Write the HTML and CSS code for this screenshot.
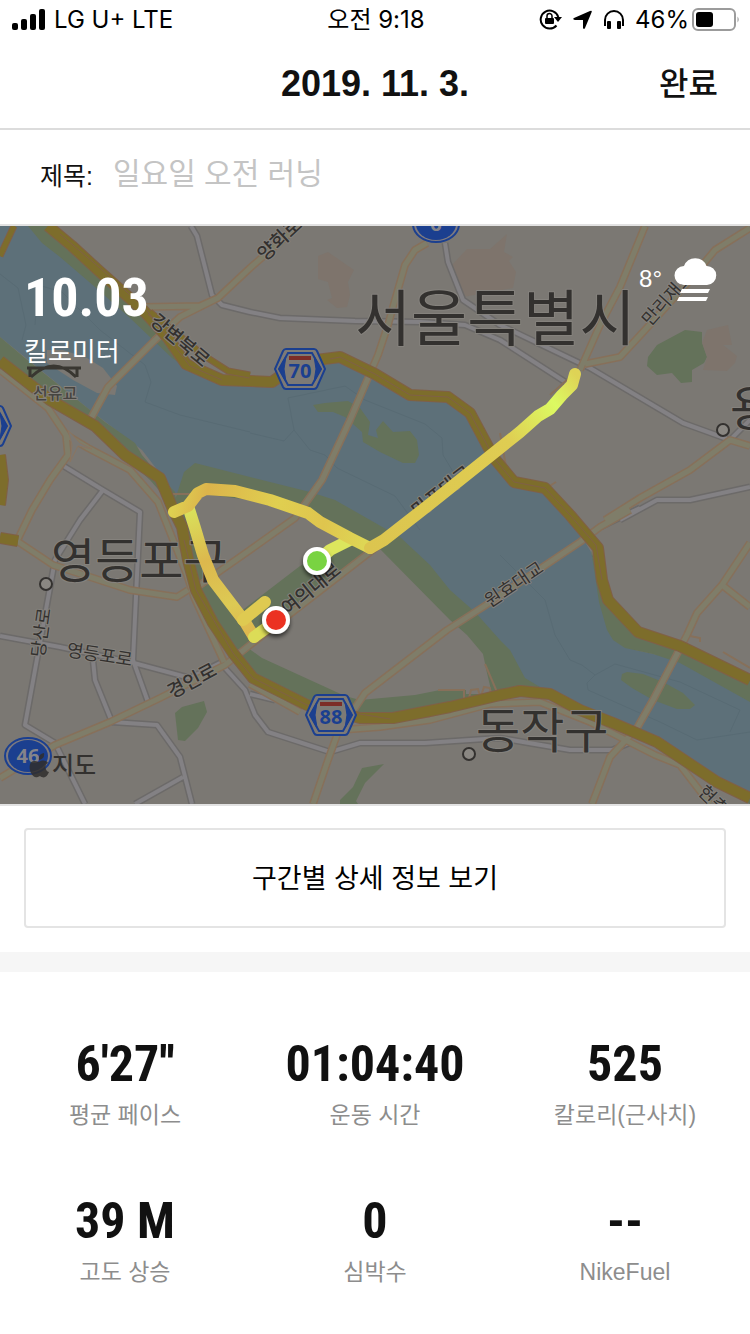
FILE: index.html
```html
<!DOCTYPE html>
<html lang="ko">
<head>
    <meta charset="UTF-8">
    <meta name="viewport" content="width=device-width, initial-scale=1.0">
    <title>러닝 상세</title>
    <link rel="stylesheet" href="styles.css">
</head>
<body>
    <div class="status-bar">
        <div class="status-left">
            <svg width="34" height="22" viewBox="0 0 34 22">
                <rect x="0" y="14" width="6" height="7" rx="2"/>
                <rect x="9" y="10" width="6" height="11" rx="2"/>
                <rect x="18" y="5" width="6" height="16" rx="2"/>
                <rect x="27" y="0" width="6" height="21" rx="2"/>
            </svg>
            <span>LG U+ LTE</span>
        </div>
        <div class="status-time">오전 9:18</div>
        <div class="status-right">
            <svg width="24" height="22" viewBox="0 0 24 22">
                <path d="M17.500 16.500A9 9 0 1 1 19.300 8" fill="none" stroke="#000" stroke-width="2"/>
                <path d="M15 8h8l-4 5z"/>
                <rect x="6" y="9" width="9" height="6" rx="1"/>
                <path d="M8 9V7a2 2 0 0 1 5 0V9" fill="none" stroke="#000" stroke-width="1.500"/>
            </svg>
            <svg width="20" height="20" viewBox="0 0 20 20">
                <path d="M1 8L17 1Q19.500 0 18.500 2.500L12 18Q11 20 10 18V10H2Q-1 9.500 1 8z"/>
            </svg>
            <svg width="22" height="20" viewBox="0 0 22 20">
                <path d="M2 16V10a9 9 0 0 1 18 0v6" fill="none" stroke="#000" stroke-width="2"/>
                <rect x="4" y="11" width="4" height="8" rx="1"/>
                <rect x="14" y="11" width="4" height="8" rx="1"/>
            </svg>
            <span>46%</span>
            <svg class="battery" width="48" height="24" viewBox="0 0 48 24">
                <rect x="1" y="1" width="42" height="21" rx="5" fill="none" stroke="#9b9b9b" stroke-width="2"/>
                <rect x="4" y="4" width="17" height="15" rx="3"/>
                <path d="M45.500 8.500q2.500 3 0 6z" fill="#9b9b9b"/>
            </svg>
        </div>
    </div>

    <header>
        <h1>2019. 11. 3.</h1>
        <button class="done-button" type="button">완료</button>
    </header>

    <div class="title-row">
        <label for="runTitle">제목:</label>
        <input id="runTitle" class="title-input" type="text" placeholder="일요일 오전 러닝">
    </div>

    <div class="map-container">
        <svg class="map" viewBox="0 226 750 578">
            <defs>
                <linearGradient id="routeEast" gradientUnits="userSpaceOnUse" x1="370" y1="548" x2="575" y2="374">
                    <stop offset="0" stop-color="#dcc54f"/>
                    <stop offset=".65" stop-color="#dfcd52"/>
                    <stop offset=".87" stop-color="#dcfa62"/>
                    <stop offset="1" stop-color="#ded356"/>
                </linearGradient>
                <linearGradient id="routeNorth" gradientUnits="userSpaceOnUse" x1="174" y1="500" x2="370" y2="548">
                    <stop offset="0" stop-color="#dfd051"/>
                    <stop offset=".15" stop-color="#dcb44b"/>
                    <stop offset=".5" stop-color="#e0cf50"/>
                    <stop offset=".75" stop-color="#dfc54e"/>
                    <stop offset="1" stop-color="#ded956"/>
                </linearGradient>
                <linearGradient id="routeWest" gradientUnits="userSpaceOnUse" x1="188" y1="506" x2="245" y2="638">
                    <stop offset="0" stop-color="#d9e45c"/>
                    <stop offset=".4" stop-color="#dcb84d"/>
                    <stop offset=".75" stop-color="#ddca54"/>
                    <stop offset="1" stop-color="#dfb64e"/>
                </linearGradient>
                <filter id="pinShadow" x="-50%" y="-50%" width="200%" height="200%">
                    <feDropShadow dx="0" dy="3" stdDeviation="2" flood-opacity=".6"/>
                </filter>
                <g id="hexShield">
                    <path d="M-14 -20H14Q16 -20 17 -18L25 0L17 18Q16 20 14 20H-14Q-16 20 -17 18L-25 0L-17 -18Q-16 -20 -14 -20z" fill="#7d7a76" stroke="#1b3f8f" stroke-width="2"/>
                    <path d="M-12 -16H12L21 0L12 16H-12L-21 0z" fill="none" stroke="#1b3f8f" stroke-width="2"/>
                    <path d="M-14 -13L-21 0L-14 13L-16 0zM14 -13L21 0L14 13L16 0z" fill="#1b3f8f" stroke="#1b3f8f" stroke-width="1"/>
                    <rect x="-11" y="-13" width="22" height="4" fill="#7c2c27"/>
                </g>
                <g id="ovalShield">
                    <ellipse rx="23" ry="18" fill="#7d7a80" stroke="#1b3f8f" stroke-width="2"/>
                    <ellipse rx="20" ry="16" fill="#1b3f8f"/>
                </g>
                <path id="streets" d="M191 226L197 236L212 295L222 305L250 312L280 318L355 321L420 322L465 325L500 340L570 385M445 243L448 262L463 300L500 325L590 368L683 423L730 440L750 420M620 520L657 500H690L750 487M62 465L103 490L140 512L133 660L148 702M103 490L80 520L55 560L25 725L55 743L85 804M0 636L60 647L130 662L190 678L222 662M93 660L95 680L112 722L157 725L180 757L192 804M183 777L135 804M225 668L245 690L255 715L268 732L330 752L360 743L425 743L500 738L570 750L612 750L632 742M600 527L640 508M250 694L275 700"/>
                <path id="roads" d="M90 420L108 387L155 340L180 317L218 298L250 268L298 226M143 307L200 306L218 298M427 243L415 250L405 265L395 300L388 325L378 355L365 385L350 420L322 480L295 518L250 550L190 592M645 226L620 287L600 325L580 370M750 228L715 250L690 280L645 330L620 357L585 364M605 520L640 498L690 470L730 440L750 446M313 804L328 760L337 735L365 693L447 630L483 607L580 542L600 527L630 510M750 543L722 585L697 613L687 635L653 700L637 728L610 757L592 804M722 585L750 607M0 370L48 408L66 435L68 455L50 480L32 510L17 541M17 541L53 565L130 590L177 597L188 590M68 436L88 448L130 470L158 502L187 575L194 597L224 662M0 778L55 745L110 722L160 698L225 665L250 645L370 552L480 466M250 684L300 712M340 730L380 727L430 720L490 704L540 702L590 722L655 755L680 765L710 804"/>
                <g id="highways">
                    <path d="M0 361L50 400L95 426L125 455L160 478L172 507L182 527L188 560L196 590L213 623L233 653L253 678L283 693L307 705L360 718H393L450 707L500 695L520 691L550 694L580 710L613 723L657 742L717 782L750 798"/>
                    <path d="M48 226L72 246L98 270L143 310L168 338L186 364L222 380L272 382L300 362L340 357L375 374L410 395L448 397L470 413L494 458L514 482L545 488L570 515L598 548L602 580L608 600L638 632L680 646L750 680"/>
                    <path d="M0 455L3 480L0 505M0 538L18 541"/>
                </g>
                <path id="ramps" d="M150 312L175 332L203 355L228 371L250 375M0 256L14 226"/>
            </defs>

            <rect x="0" y="226" width="750" height="578" fill="#7b7873"/>

            <!-- river -->
            <path fill="#5d7079" d="M0 226H48L72 246L98 270L143 310L165 340L185 367L220 382L272 384L300 370L340 362L375 378L410 397L450 403L470 420L495 465L515 486L545 493L578 530L591 552L600 585L610 625L635 650L680 660L750 690V800L655 738L600 716L550 694L500 697L400 640L200 500L175 493L142 450L90 410L0 337z"/>
            <g class="depth">
                <path d="M0 274L18 288L26 325L22 340M35 325L38 285L62 292L100 330L145 365L151 382L145 402L180 415L250 432"/>
                <path d="M288 398L294 430L310 450L325 455L337 468L395 496L420 530"/>
                <path d="M288 398L345 386L365 400L425 424L442 438L443 455L458 480"/>
                <path d="M500 555L545 600L555 635L570 660L582 665L595 675L587 683L588 690L660 722L697 740L750 732M595 675L615 664L680 682L740 710L730 732"/>
                <path d="M250 433L284 441L294 430"/>
            </g>

            <!-- river parks and banks -->
            <g fill="#64725a">
                <path d="M28 226H48L72 246L98 270L143 308L185 367L172 358L130 318L95 287L60 257L42 243z"/>
                <path d="M0 337L25 358L50 378L75 398L105 422L135 443L142 455L153 468L175 492L178 512L150 480L95 430L50 403L0 365z"/>
                <path d="M175 500L184 472L195 463L250 477L310 492L335 500L400 537L430 565L450 590L475 612L500 640L510 650L525 678L545 690L500 699L400 718L330 716L255 682L233 655L192 580L183 515z"/>
                <path d="M591 550L601 580L607 605L638 630L680 642L750 677V702L680 663L653 654L625 648L613 640L607 630L599 602z"/>
                <path d="M313 405L325 403L348 401L360 408L370 422L368 435L378 438L376 430L383 421L393 432L410 431L417 440L419 455L415 463L403 463L380 452L363 442L362 432L345 417L333 412L318 412z"/>
                <path d="M621 680L622 674L627 672L643 674L663 682L683 693L695 705L690 709L677 709L653 700L632 688z"/>
                <path d="M647 366L648 357L657 345L685 330L702 332V342L707 357L704 363L692 370V382L681 383L672 373L657 375z"/>
                <path d="M175 713L182 707L204 701L207 712L198 728L185 741L178 740z"/>
                <path d="M384 764L362 768L353 787L340 800V804H358L356 801L365 783z"/>
                <path d="M700 770L750 796V804z"/>
            </g>

            <!-- Yeouido -->
            <g fill="#7b7873">
                <path d="M192 500L203 494L250 500L300 515L345 540L300 566L240 612L215 580L200 540z"/>
                <path d="M380 549L450 620L467 635L483 654L487 673L492 694H466V690H440L415 695L360 700L345 696L262 658L248 648L372 552z"/>
                <path d="M47 350L63 350L87 358L103 368L117 386L115 395L97 393L73 380L47 363z"/>
            </g>

            <!-- built-up blocks -->
            <g fill="#7e746c">
                <path d="M318 256L328 252L354 270L348 282L350 295L347 307L337 308L327 300L332 298L328 282L318 279z"/>
                <path d="M452 265L467 249L490 249L507 234L504 252L513 257L509 261L516 272L513 288L463 297z"/>
                <path d="M702 343L707 330L728 325L732 345L723 345L737 356L735 363L727 371L703 370L707 357z"/>
            </g>

            <use href="#streets" class="street-case"/>
            <use href="#streets" class="street"/>

            <!-- main roads and bridges -->
            <use href="#roads" class="road-case"/>
            <use href="#roads" class="road"/>
            <path class="lane" d="M438 690H464V700M469 698L471 690L478 689L480 696M481 696L484 687L490 688L491 696M485 664L497 692M578 370L550 395M500 433L508 478M165 494H190M690 636L700 638V642M723 652L750 668M548 487L556 482"/>
            <path d="M68 430L80 443L92 449L78 446L70 462L72 445z" fill="#7b7873" stroke="#8b7560"/>

            <!-- expressways -->
            <use href="#highways" class="highway-case"/>
            <use href="#highways" class="highway"/>
            <use href="#ramps" class="ramp-case"/>
            <use href="#ramps" class="ramp"/>
            <path class="median" d="M60 234L100 268L145 308L190 366L222 380M330 359L340 357L375 374L410 395L448 397L470 413L494 458L514 482L545 488L570 515L596 545L602 580M184 540L196 590L233 653L253 678L307 705L390 719"/>

            <!-- road labels -->
            <g class="label-road">
                <text transform="translate(265 262) rotate(-43)">양화로</text>
                <text transform="translate(149 323) rotate(40)">강변북로</text>
                <text transform="translate(418 518) rotate(-38)">마포대교</text>
                <text transform="translate(288 616) rotate(-39)">여의대로</text>
                <text transform="translate(172 699) rotate(-28)">경인로</text>
            </g>
            <g class="label-street">
                <text transform="translate(650 327) rotate(-48)">만리재로</text>
                <text transform="translate(490 608) rotate(-34)">원효대교</text>
                <text transform="translate(44 658) rotate(-82)">당산로</text>
                <text transform="translate(66 656) rotate(9)">영등포로</text>
                <text transform="translate(697 793) rotate(45)">현충로</text>
            </g>
            <text class="label-bridge" x="33" y="399">선유교</text>
            <path d="M27 368H81M30 367V377M77 367V377M31 377Q54 355 76 377" fill="none" stroke="#393731" stroke-width="3"/>

            <!-- districts -->
            <g class="label-district">
                <text class="label-city" x="355" y="341">서울특별시</text>
                <text x="51" y="578">영등포구</text>
                <text x="476" y="748">동작구</text>
                <text x="730" y="426">용산구</text>
            </g>
            <g fill="#8a8782" stroke="#33312f" stroke-width="2">
                <circle cx="46" cy="584" r="6"/>
                <circle cx="469" cy="754" r="6"/>
                <circle cx="723" cy="430" r="6"/>
            </g>

            <!-- route shields -->
            <use href="#hexShield" x="300" y="369"/>
            <use href="#hexShield" x="331" y="715"/>
            <use href="#hexShield" x="-14" y="426"/>
            <use href="#ovalShield" x="436" y="224"/>
            <use href="#ovalShield" x="28" y="756"/>
            <g class="shield-text">
                <text x="300" y="378">70</text>
                <text x="331" y="724">88</text>
                <text class="light" x="436" y="231">6</text>
                <text class="light" x="28" y="763">46</text>
            </g>
            <path d="M39 760Q38 754 44 753Q45 759 39 760M39 762C43 759 47 761 48 763C44 765 45 771 49 772C47 777 44 779 40 776C36 778 34 778 31 773C28 767 30 760 35 761C37 761 38 762 39 762z" fill="#302e2d" fill-opacity=".85"/>
            <text class="label-maps" x="52" y="774">지도</text>

            <!-- run -->
            <g class="route">
                <path d="M318 561L330 550L350 540" stroke="#dce65d"/>
                <path d="M188 506L195 528L203 555L213 580L232 605L245 622L254 637" stroke="url(#routeWest)"/>
                <path d="M265 602L243 620" stroke="#dfca51"/>
                <path d="M254 637L276 621" stroke="#dcdc57"/>
                <path d="M174 512L188 506L198 493L206 489L235 491L270 500L308 513L320 522L350 538L370 548" stroke="url(#routeNorth)"/>
                <path d="M370 548L384 540L430 504L480 464L520 432L538 416L550 409L562 395L572 385L575 374" stroke="url(#routeEast)"/>
            </g>
            <g stroke="#fff" stroke-width="4" filter="url(#pinShadow)">
                <circle cx="317" cy="561" r="12" fill="#79d343"/>
                <circle cx="276" cy="620" r="12" fill="#eb3323"/>
            </g>
        </svg>

        <div class="distance">
            <div class="distance-value">10.03</div>
            <div class="distance-unit">킬로미터</div>
        </div>
        <div class="weather">
            <span>8°</span>
            <svg width="44" height="46" viewBox="0 0 44 46" fill="#fff">
                <path d="M10 29A9.500 9.500 0 1 1 10 10A12 12 0 0 1 32.500 10A9.500 9.500 0 1 1 33 29z"/>
                <path d="M8 33H36L34 37H6zM5 41H34L32 45H3z"/>
            </svg>
        </div>
    </div>

    <div class="detail-row">
        <button class="detail-button" type="button">구간별 상세 정보 보기</button>
    </div>

    <main class="stats">
        <div class="stat">
            <div class="stat-value">6'27''</div>
            <div class="stat-label">평균 페이스</div>
        </div>
        <div class="stat">
            <div class="stat-value">01:04:40</div>
            <div class="stat-label">운동 시간</div>
        </div>
        <div class="stat">
            <div class="stat-value">525</div>
            <div class="stat-label">칼로리(근사치)</div>
        </div>
        <div class="stat">
            <div class="stat-value">39 M</div>
            <div class="stat-label">고도 상승</div>
        </div>
        <div class="stat">
            <div class="stat-value">0</div>
            <div class="stat-label">심박수</div>
        </div>
        <div class="stat">
            <div class="stat-value">--</div>
            <div class="stat-label">NikeFuel</div>
        </div>
    </main>
</body>
</html>
```
FILE: styles.css
```css
* {
    box-sizing: border-box;
}

body {
    margin: 0;
    background-color: #fff;
    color: #111;
    font-family: "Liberation Sans", "Noto Sans CJK KR", sans-serif;
}

button {
    font-family: inherit;
    cursor: pointer;
}

.status-bar {
    display: grid;
    grid-template-columns: 1fr auto 1fr;
    align-items: center;
    height: 40px;
    padding: 0 10px 0 12px;
    color: #000;
    font-family: Inter, "Noto Sans CJK KR", sans-serif;
    font-size: 24px;
    line-height: 40px;
}

.status-left,
.status-right {
    display: flex;
    align-items: center;
    gap: 8px;
}

.status-right {
    justify-content: flex-end;
    gap: 10px;
}

.battery {
    margin-left: -7px;
}

header {
    display: grid;
    grid-template-columns: 1fr auto 1fr;
    align-items: center;
    height: 90px;
    padding: 0 32px;
    border-bottom: 2px solid #dcdcdc;
}

header h1 {
    grid-column: 2;
    margin: 0;
    font-size: 36px;
    line-height: 40px;
}

.done-button {
    justify-self: end;
    padding: 0;
    border: none;
    background: none;
    color: #111;
    font-size: 32px;
    font-weight: 500;
    line-height: 40px;
}

.title-row {
    display: flex;
    align-items: center;
    gap: 20px;
    height: 96px;
    padding: 0 40px 6px;
    border-bottom: 2px solid #e2e2e2;
}

.title-row label {
    padding-top: 4px;
    font-size: 25px;
    line-height: 40px;
}

.title-input {
    flex: 1;
    min-width: 0;
    padding: 0;
    border: none;
    outline: none;
    font-family: inherit;
    font-size: 30px;
    line-height: 40px;
    color: #111;
}

.title-input::placeholder {
    color: #c4c4c4;
}

.map-container {
    position: relative;
    border-bottom: 2px solid #e2e2e2;
}

.map {
    display: block;
    width: 100%;
    font-family: "Noto Sans CJK KR", sans-serif;
}

.depth {
    fill: none;
    stroke: #586b74;
    stroke-width: 1;
}

.street-case,
.street,
.road-case,
.road,
.highway-case,
.highway,
.ramp-case,
.ramp {
    fill: none;
    stroke-linejoin: round;
}

.street-case {
    stroke: #6c6a69;
    stroke-width: 7;
}

.street {
    stroke: #838184;
    stroke-width: 4;
}

.road-case {
    stroke: #87705a;
    stroke-width: 8;
}

.road {
    stroke: #7f7d69;
    stroke-width: 5;
}

.highway-case {
    stroke: #806047;
    stroke-width: 12;
}

.highway {
    stroke: #7d6d2b;
    stroke-width: 10;
}

.ramp-case {
    stroke: #806047;
    stroke-width: 7;
}

.ramp {
    stroke: #7d6d2b;
    stroke-width: 5;
}

.lane {
    fill: none;
    stroke: #87705a;
    stroke-width: 2;
}

.median {
    fill: none;
    stroke: #806047;
    stroke-width: 1;
}

.map text {
    fill: #33312f;
    stroke: #85827d;
    stroke-width: 2;
    stroke-linejoin: round;
    paint-order: stroke;
}

.label-road {
    font-size: 19px;
    font-weight: 500;
}

.label-street {
    font-size: 18px;
}

.map .label-bridge {
    font-size: 16px;
    font-weight: 500;
    fill: #464440;
}

.label-district {
    font-size: 48px;
}

.label-city {
    font-size: 61px;
}

.map .label-maps {
    font-size: 24px;
    font-weight: 500;
    stroke: none;
}

.shield-text {
    font-family: "Open Sans", sans-serif;
    font-size: 20px;
    font-weight: 700;
    text-anchor: middle;
}

.map .shield-text text {
    fill: #1b3f8f;
    stroke: none;
}

.map .shield-text .light {
    fill: #85848a;
}

.route {
    fill: none;
    stroke-width: 12;
    stroke-linecap: round;
    stroke-linejoin: round;
}

.distance {
    position: absolute;
    top: 40px;
    left: 24px;
    color: #fff;
}

.distance-value,
.stat-value {
    font-family: "Roboto Condensed", Roboto, sans-serif;
    font-weight: 700;
}

.distance-value {
    font-size: 54px;
    line-height: 64px;
}

.distance-unit {
    font-size: 26px;
    line-height: 44px;
}

.weather {
    position: absolute;
    top: 30px;
    right: 32px;
    display: flex;
    align-items: center;
    gap: 12px;
    color: #fff;
    font-size: 24px;
}

.detail-row {
    padding: 22px 24px 24px;
    border-bottom: 20px solid #f6f6f6;
}

.detail-button {
    width: 100%;
    height: 100px;
    padding: 0 0 4px;
    border: 2px solid #e4e4e4;
    border-radius: 4px;
    background-color: #fff;
    color: #000;
    font-size: 27px;
}

.stats {
    display: grid;
    grid-template-columns: repeat(3, 1fr);
    row-gap: 53px;
    padding: 60px 0;
    text-align: center;
}

.stat-value {
    font-size: 50px;
    line-height: 64px;
}

.stat-label {
    padding-bottom: 2px;
    color: #8d8d8d;
    font-size: 23px;
    line-height: 38px;
}
```
